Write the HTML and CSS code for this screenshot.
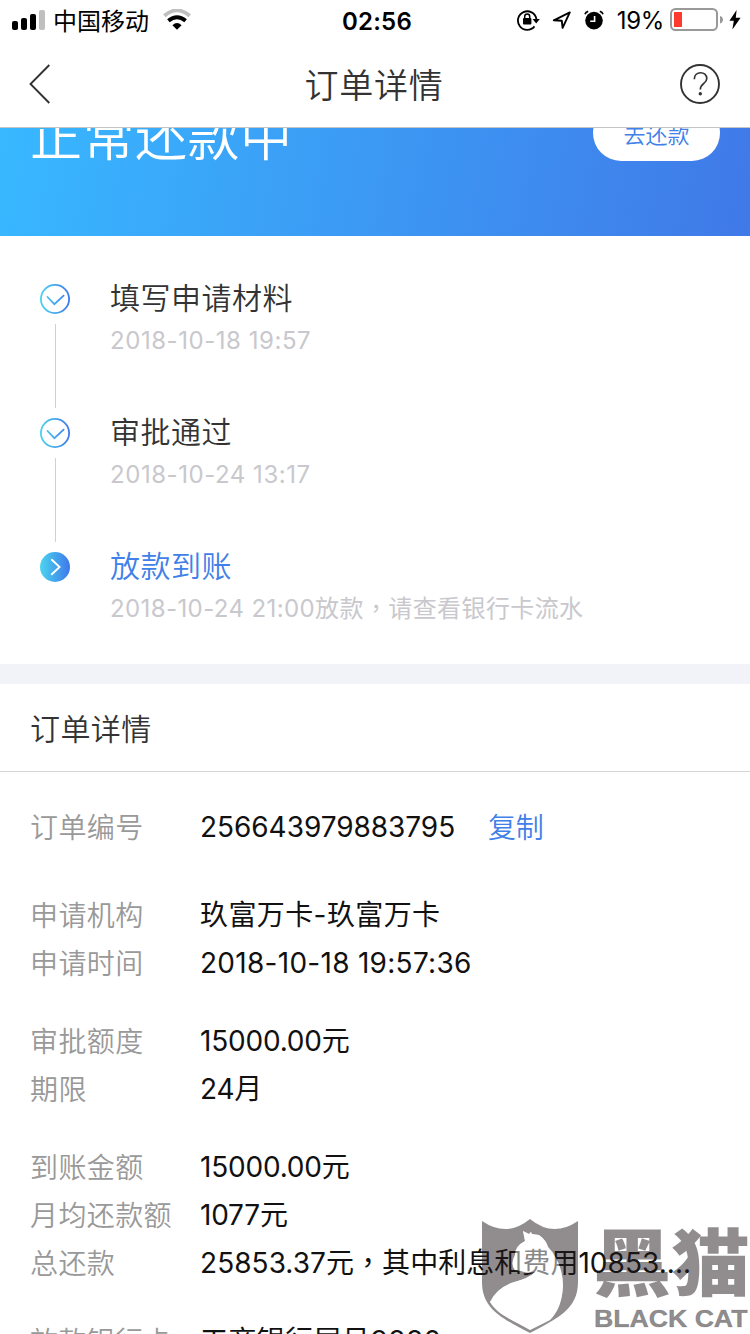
FILE: index.html
```html
<!DOCTYPE html>
<html lang="zh-CN">
<head>
	<meta charset="UTF-8">
	<meta name="viewport" content="width=device-width, initial-scale=1.0">
	<title>订单详情</title>
	<link rel="stylesheet" href="styles.css">
</head>
<body>

	<div class="statusbar">
		<div class="carrier">
			<svg class="signal" width="34" height="22" viewBox="0 0 34 22">
				<rect x="0" y="12" width="6" height="9" rx="2"/>
				<rect x="9" y="9" width="6" height="12" rx="2"/>
				<rect x="18" y="5" width="6" height="16" rx="2"/>
				<rect x="27" y="1" width="6" height="20" rx="2" fill="#bfbfbf"/>
			</svg>
			<span class="carrierName">中国移动</span>
			<svg class="wifi" width="28" height="22" viewBox="0 0 28 22">
				<path d="M1.3 6.8Q14 -4 26.7 6.8" fill="none" stroke="#bfbfbf" stroke-width="3.8"/>
				<path d="M5.4 11.8Q14 4.8 22.6 11.8" fill="none" stroke="#000" stroke-width="4"/>
				<path d="M9.4 16.2Q14 12 18.6 16.2L14 20.8z"/>
			</svg>
		</div>
		<div class="clock">02:56</div>
		<div class="indicators">
			<svg width="24" height="22" viewBox="0 0 24 22">
				<path d="M17.5 17.4A9.3 9.3 0 1 1 19.4 10" fill="none" stroke="#000" stroke-width="1.8"/>
				<path d="M15.6 10h7.2l-3.6 4.6z"/>
				<rect x="6" y="9" width="8.4" height="6.6" rx="1"/>
				<path d="M7.7 9.5V7.4a2.5 2.5 0 0 1 5 0v2.1" fill="none" stroke="#000" stroke-width="1.5"/>
			</svg>
			<svg class="arrow" width="20" height="20" viewBox="0 0 20 20">
				<path d="M1.8 10.3L17.8 2.4L10.6 17.8L9.8 10.8z" fill="none" stroke="#000" stroke-width="1.9" stroke-linejoin="round"/>
			</svg>
			<svg class="alarm" width="20" height="20" viewBox="0 0 20 20">
				<circle cx="10" cy="10.6" r="8.8"/>
				<path d="M1 4.2Q1.6 2 4.2 1.4M19 4.2Q18.4 2 15.8 1.4" fill="none" stroke="#000" stroke-width="1.7"/>
				<path d="M10.6 6v5.2H6.2" fill="none" stroke="#fff" stroke-width="1.6"/>
			</svg>
			<span class="percent">19%</span>
			<svg class="battery" width="54" height="24" viewBox="0 0 54 24">
				<rect x="1" y="1" width="46" height="21" rx="4.5" fill="#fff" stroke="#999" stroke-width="2"/>
				<rect x="4" y="4" width="8" height="15" fill="#ff3b30"/>
				<path d="M50 8q3 1 3 3.7T50 15.5z" fill="#999"/>
			</svg>
			<svg class="bolt" width="12" height="20" viewBox="0 0 12 20">
				<path d="M7.6 0L.4 10.8h4.4L3.4 19.6L11.6 7.8H6.8z"/>
			</svg>
		</div>
	</div>

	<div class="navbar">
		<svg class="back" width="22" height="40" viewBox="0 0 22 40">
			<path d="M20.3 1L1.5 20L20.3 39" fill="none" stroke="#333" stroke-width="1.9"/>
		</svg>
		<h1>订单详情</h1>
		<svg class="help" width="40" height="40" viewBox="0 0 40 40">
			<circle cx="20" cy="20" r="19" fill="none" stroke="#333" stroke-width="1.9"/>
			<path d="M14.3 15.3C14.3 6.6 26.8 6.8 26.8 14.6C26.8 19.6 20.3 19.3 20.3 25.6" fill="none" stroke="#333" stroke-width="1.7"/>
			<circle cx="20.3" cy="29.7" r="1.7" fill="#333"/>
		</svg>
	</div>

	<div class="hero">
		<div class="heroTitle">正常还款中</div>
		<a class="repay">去还款</a>
	</div>

	<svg class="defs" width="0" height="0">
		<linearGradient id="blue" x1="0" x2="30" y1="0" y2="0" gradientUnits="userSpaceOnUse">
			<stop offset="0" stop-color="#4bd5ee"/>
			<stop offset="1" stop-color="#3e78eb"/>
		</linearGradient>
	</svg>

	<ul class="steps">
		<li class="step">
			<div class="mark">
				<svg width="30" height="30" viewBox="0 0 30 30">
					<circle cx="15" cy="15" r="14.1" fill="none" stroke="url(#blue)" stroke-width="1.8"/>
					<path d="M7.5 13L14.4 20.2L23.6 11.6" fill="none" stroke="url(#blue)" stroke-width="1.8" stroke-linecap="round"/>
				</svg>
				<div class="line"></div>
			</div>
			<div class="info">
				<h3>填写申请材料</h3>
				<p>2018-10-18 19:57</p>
			</div>
		</li>
		<li class="step">
			<div class="mark">
				<svg width="30" height="30" viewBox="0 0 30 30">
					<circle cx="15" cy="15" r="14.1" fill="none" stroke="url(#blue)" stroke-width="1.8"/>
					<path d="M7.5 13L14.4 20.2L23.6 11.6" fill="none" stroke="url(#blue)" stroke-width="1.8" stroke-linecap="round"/>
				</svg>
				<div class="line"></div>
			</div>
			<div class="info">
				<h3>审批通过</h3>
				<p>2018-10-24 13:17</p>
			</div>
		</li>
		<li class="step active">
			<div class="mark">
				<svg width="30" height="30" viewBox="0 0 30 30">
					<circle cx="15" cy="15" r="15" fill="url(#blue)"/>
					<path d="M11.8 7.8L19.6 15L11.8 22.2" fill="none" stroke="#fff" stroke-width="1.9" stroke-linecap="round"/>
				</svg>
			</div>
			<div class="info">
				<h3>放款到账</h3>
				<p>2018-10-24 21:00放款<span class="comma" lang="zh-TW">，</span>请查看银行卡流水</p>
			</div>
		</li>
	</ul>

	<h2>订单详情</h2>

	<div class="detail">
		<div class="group first">
			<div class="row"><span class="label">订单编号</span><span class="value num">256643979883795</span><a class="copy">复制</a></div>
		</div>
		<div class="group">
			<div class="row"><span class="label">申请机构</span><span class="value">玖富万卡-玖富万卡</span></div>
			<div class="row"><span class="label">申请时间</span><span class="value time">2018-10-18 19:57:36</span></div>
		</div>
		<div class="group">
			<div class="row"><span class="label">审批额度</span><span class="value amount">15000.00元</span></div>
			<div class="row"><span class="label">期限</span><span class="value amount">24月</span></div>
		</div>
		<div class="group">
			<div class="row"><span class="label">到账金额</span><span class="value amount">15000.00元</span></div>
			<div class="row"><span class="label">月均还款额</span><span class="value amount">1077元</span></div>
			<div class="row"><span class="label">总还款</span><span class="value total">25853.37元<span class="comma" lang="zh-TW">，</span>其中利息和费用10853....</span></div>
		</div>
		<div class="group">
			<div class="row"><span class="label">放款银行卡</span><span class="value">工商银行尾号9880</span></div>
		</div>
	</div>

	<div class="watermark">
		<svg class="shield" width="98" height="116" viewBox="0 0 98 116">
			<path class="dark" fill-rule="evenodd" d="M1 3Q26 20 49 1Q72 20 97 3V64C97 92 75 101 49 115C23 101 1 92 1 64z M42 13L48 16L50 14L51 16L58 17Q65 22 67 29Q72 34 75 40Q82 53 82 68Q81 90 69 102L49 112C30 101 17 97 9 84Q15 71 30 65Q49 60 54 54Q48 56 40 53L34 52Q29 46 34 37Q34 28 44 23z"/>
			<path class="light" d="M42 13L48 16L50 14L51 16L58 17Q65 22 67 29Q72 34 75 40Q82 53 82 68Q81 90 69 102L49 112C30 101 17 97 9 84Q15 71 30 65Q49 60 54 54Q48 56 40 53L34 52Q29 46 34 37Q34 28 44 23z"/>
		</svg>
		<div class="brand">
			<div class="brandName">黑猫</div>
			<div class="brandEn">BLACK CAT</div>
		</div>
	</div>

</body>
</html>
```

FILE: styles.css
```css
*{
	box-sizing: border-box;
}
body{
	margin: 0;
	width: 750px;
	height: 1334px;
	overflow: hidden;
	position: relative;
	background: #fff;
	color: #333;
	font-family: Inter, "Noto Sans CJK SC", sans-serif;
	font-weight: 350;
}
svg{
	display: block;
	flex: none;
}
h1, h2, h3, p, ul{
	margin: 0;
	padding: 0;
	font-weight: 350;
	list-style: none;
}
.statusbar{
	height: 40px;
	display: grid;
	grid-template-columns: 1fr auto 1fr;
	align-items: center;
	padding: 0 10px 0 12px;
	color: #000;
	font-weight: 400;
}
.carrier, .indicators{
	display: flex;
	align-items: center;
	height: 40px;
}
.carrierName{
	font-size: 24px;
	line-height: 36px;
	margin-left: 7px;
	padding-top: 3px;
}
.wifi{
	margin-left: 14px;
}
.clock{
	font-size: 24px;
	font-weight: 600;
	letter-spacing: .2px;
	padding: 2px 0 0 2px;
}
.indicators{
	justify-content: flex-end;
}
.arrow{
	margin-left: 11px;
}
.alarm{
	margin-left: 12px;
}
.percent{
	font-size: 24px;
	margin-left: 13px;
	padding-top: 1px;
	letter-spacing: -.3px;
}
.battery{
	margin-left: 6px;
}
.bolt{
	margin: 0 -1px 0 5px;
}
.navbar{
	height: 88px;
	display: flex;
	align-items: center;
	justify-content: space-between;
	padding: 0 30px 0 29px;
	border-bottom: 1px solid #c4c4c6;
}
h1{
	font-size: 34px;
	letter-spacing: .8px;
	margin-left: 17px;
}
.hero{
	height: 108px;
	display: flex;
	justify-content: space-between;
	overflow: hidden;
	padding: 0 30px;
	background: linear-gradient(100deg,#38b8ff,#4079e8);
	color: #fff;
}
.heroTitle{
	font-size: 52px;
	line-height: 60px;
	letter-spacing: .5px;
	margin-top: -20px;
}
.repay{
	width: 127px;
	height: 56px;
	margin-top: -23px;
	border-radius: 28px;
	background: #fff;
	color: #4080e8;
	font-size: 22px;
	line-height: 61px;
	text-align: center;
}
.defs{
	position: absolute;
}
.steps{
	height: 448px;
	padding: 48px 40px 0;
	border-bottom: 20px solid #f2f3f8;
}
.step{
	display: flex;
	height: 134px;
}
.mark{
	width: 30px;
	display: flex;
	flex-direction: column;
	align-items: center;
}
.line{
	width: 1px;
	height: 84px;
	margin-top: 10px;
	background: #d0d0d0;
}
.info{
	margin-left: 40px;
}
.info h3{
	font-size: 30px;
	line-height: 30px;
	letter-spacing: .5px;
	margin-top: -1px;
}
.info p{
	font-size: 24px;
	font-weight: 400;
	line-height: 30px;
	margin-top: 13px;
	color: #c8c8cd;
	letter-spacing: .55px;
}
.active h3{
	color: #4080e8;
}
.info .comma, .value .comma{
	font-family: "Noto Sans CJK TC", sans-serif;
	line-height: 1;
}
.info .comma{
	font-weight: 350;
}
.active p{
	letter-spacing: .4px;
}
h2{
	height: 88px;
	padding-left: 30px;
	font-size: 30px;
	line-height: 90px;
	letter-spacing: .4px;
	border-bottom: 1px solid #d5d5d7;
}
.detail{
	padding: 31px 30px 0;
}
.group{
	margin-bottom: 30px;
}
.first{
	margin-bottom: 40px;
}
.row{
	display: flex;
	height: 48px;
	font-size: 28px;
	line-height: 48px;
	letter-spacing: .4px;
	white-space: nowrap;
}
.label{
	width: 170px;
	color: #999;
	padding-top: 1px;
}
.value{
	color: #111;
	font-weight: 400;
}
.num{
	letter-spacing: -.05px;
}
.amount{
	letter-spacing: -.2px;
}
.total{
	letter-spacing: .05px;
}
.time{
	letter-spacing: .28px;
}
.copy{
	margin-left: 33px;
	color: #4080e8;
	letter-spacing: -.4px;
	padding-top: 1px;
}
/* logo in the bottom right corner, on top of the list */
.watermark{
	position: absolute;
	left: 481px;
	top: 1218px;
	display: flex;
}
.dark{
	fill: rgba(35,28,30,.5);
}
.light{
	fill: rgba(255,255,255,.5);
}
.brand{
	margin-left: 14px;
	color: rgba(35,28,30,.5);
	font-weight: 900;
	white-space: nowrap;
}
.brandName{
	font-family: "Noto Sans CJK SC", sans-serif;
	font-size: 77px;
	line-height: 82px;
	transform: scale(1.02,.95);
	transform-origin: left center;
}
.brandEn{
	font-family: "Liberation Sans", Arial, sans-serif;
	font-size: 24px;
	line-height: 30px;
	margin: 4px 0 0 1px;
	transform: scaleX(1.11);
	transform-origin: left;
	-webkit-text-stroke: .6px rgba(35,28,30,.3);
}
```
